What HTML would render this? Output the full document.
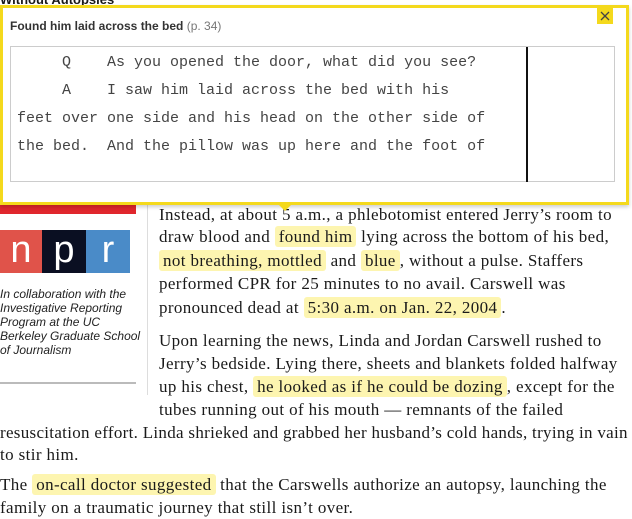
<!DOCTYPE html>
<html><head><meta charset="utf-8"><style>
*{margin:0;padding:0;box-sizing:border-box}
body{width:632px;height:518px;overflow:hidden;background:#fff;position:relative;font-family:"Liberation Serif",serif;color:#1a1a1a}
.l{position:absolute;font-size:17px;line-height:23px;height:23px;white-space:nowrap;letter-spacing:.38px}
.h{background:#fdf5b0;border-radius:3px;padding:1px 4px}
.s{position:absolute;font-family:"Liberation Sans",sans-serif;font-style:italic;font-size:12px;line-height:14px;color:#222}
.m{position:absolute;font-family:"Liberation Mono",monospace;font-size:15px;color:#444;white-space:pre}
</style></head><body>
<div style="position:absolute;left:0;top:-8px;font:bold 13px 'Liberation Sans',sans-serif">Without Autopsies</div>
<div style="position:absolute;left:0;top:190px;width:136px;height:24px;background:#e0262d"></div>
<div style="position:absolute;left:0;top:230px;width:42px;height:43px;background:#e0534a;color:#fff;font:38px 'Liberation Sans',sans-serif;text-align:center;line-height:40px">n</div>
<div style="position:absolute;left:42px;top:230px;width:44px;height:43px;background:#0a0f22;color:#fff;font:38px 'Liberation Sans',sans-serif;text-align:center;line-height:40px">p</div>
<div style="position:absolute;left:86px;top:230px;width:44px;height:43px;background:#4a8bc8;color:#fff;font:38px 'Liberation Sans',sans-serif;text-align:center;line-height:40px">r</div>
<div class="s" style="left:0;top:287px">In collaboration with the</div>
<div class="s" style="left:0;top:301px">Investigative Reporting</div>
<div class="s" style="left:0;top:315px">Program at the UC</div>
<div class="s" style="left:0;top:329px">Berkeley Graduate School</div>
<div class="s" style="left:0;top:343px">of Journalism</div>
<div style="position:absolute;left:0;top:382px;width:136px;height:2px;background:#bbb"></div>
<div style="position:absolute;left:147px;top:205px;width:1px;height:190px;background:#ddd"></div>

<div class="l" style="left:159px;top:203px">Instead, at about 5 a.m., a phlebotomist entered Jerry’s room to</div>
<div class="l" style="left:159px;top:225px">draw blood and <span class="h">found him</span> lying across the bottom of his bed,</div>
<div class="l" style="left:159px;top:249px"><span class="h">not breathing, mottled</span> and <span class="h">blue</span>, without a pulse. Staffers</div>
<div class="l" style="left:159px;top:272px">performed CPR for 25 minutes to no avail. Carswell was</div>
<div class="l" style="left:159px;top:296px">pronounced dead at <span class="h">5:30 a.m. on Jan. 22, 2004</span>.</div>
<div class="l" style="left:159px;top:329px">Upon learning the news, Linda and Jordan Carswell rushed to</div>
<div class="l" style="left:159px;top:352px">Jerry’s bedside. Lying there, sheets and blankets folded halfway</div>
<div class="l" style="left:159px;top:375px">up his chest, <span class="h">he looked as if he could be dozing</span>, except for the</div>
<div class="l" style="left:159px;top:398px">tubes running out of his mouth — remnants of the failed</div>
<div class="l" style="left:0;top:421px;letter-spacing:.3px">resuscitation effort. Linda shrieked and grabbed her husband’s cold hands, trying in vain</div>
<div class="l" style="left:0;top:443px">to stir him.</div>
<div class="l" style="left:0;top:473px">The <span class="h">on-call doctor suggested</span> that the Carswells authorize an autopsy, launching the</div>
<div class="l" style="left:0;top:496px">family on a traumatic journey that still isn’t over.</div>

<div style="position:absolute;left:0;top:5px;width:629px;height:200px;border:3px solid #f4d91c;background:#fff;box-shadow:0 2px 4px rgba(0,0,0,.2)"></div>
<div style="position:absolute;left:277px;top:203px;width:0;height:0;border-left:8px solid transparent;border-right:8px solid transparent;border-top:8px solid #f4d91c"></div>
<div style="position:absolute;left:597px;top:8px;width:16px;height:16px;background:#f4d91c"><svg width="16" height="16"><path d="M4 4L12 12M12 4L4 12" stroke="#444" stroke-width="1.3"/></svg></div>
<div style="position:absolute;left:10px;top:19px;font:bold 12px 'Liberation Sans',sans-serif;color:#333">Found him laid across the bed <span style="font-weight:normal;color:#777">(p. 34)</span></div>
<div style="position:absolute;left:10px;top:46px;width:605px;height:136px;border:1px solid #ccc;background:#fff"></div>
<div style="position:absolute;left:526px;top:47px;width:2px;height:135px;background:#111"></div>
<div class="m" style="left:17px;top:54px">     Q    As you opened the door, what did you see?</div>
<div class="m" style="left:17px;top:82px">     A    I saw him laid across the bed with his</div>
<div class="m" style="left:17px;top:110px">feet over one side and his head on the other side of</div>
<div class="m" style="left:17px;top:138px">the bed.  And the pillow was up here and the foot of</div>
</body></html>
